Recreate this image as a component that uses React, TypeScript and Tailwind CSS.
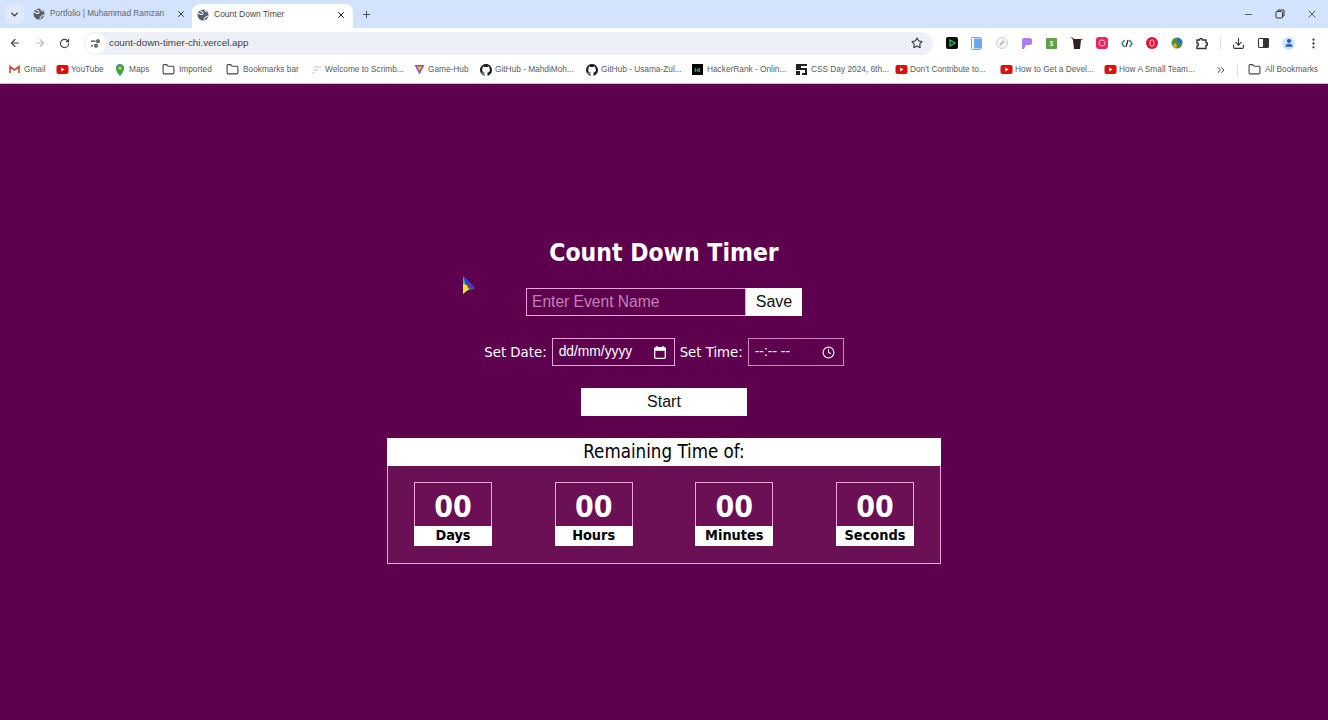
import React from 'react';
import { ArrowLeft, ArrowRight, RotateCw, Star, Plus, X, Minus, ChevronDown, Folder, Download, MoreVertical, ChevronsRight, Clock, User } from 'lucide-react';

const TabGlobe = () => (
  <svg width="12" height="12" viewBox="0 0 12 12" className="shrink-0">
    <circle cx="6" cy="6" r="5.500" fill="#5b6068" />
    <path d="M3 1.500c1 1 2.500 1 3 2.500S4 6 3 5 1 4 .8 5M7 11c0-2 1-2 2-3s2-1 2.500-1M7.500.8C8 2 8.500 3 10 3" stroke="#dfe7f5" strokeWidth="1.100" fill="none" />
  </svg>
);

const YT = () => (
  <svg width="13" height="13" viewBox="0 0 13 13" className="shrink-0">
    <rect x="0.500" y="2" width="12" height="9" rx="2" fill="#e00d0d" />
    <path d="M5.200 4.500v4l3.400-2z" fill="#fff" />
  </svg>
);

const GH = () => (
  <svg width="12" height="12" viewBox="0 0 16 16" className="shrink-0" fill="#1b1f23">
    <path d="M8 0C3.580 0 0 3.580 0 8c0 3.540 2.290 6.530 5.470 7.590.4.070.55-.17.55-.38 0-.19-.01-.82-.01-1.490-2.010.37-2.530-.49-2.690-.94-.09-.23-.48-.94-.82-1.130-.28-.15-.68-.52-.01-.53.63-.01 1.080.58 1.230.82.72 1.210 1.870.87 2.330.66.07-.52.28-.87.51-1.070-1.780-.2-3.640-.89-3.640-3.950 0-.87.31-1.590.82-2.150-.08-.2-.36-1.020.08-2.120 0 0 .67-.21 2.200.82.64-.18 1.320-.27 2-.27s1.360.09 2 .27c1.530-1.040 2.200-.82 2.200-.82.44 1.100.16 1.920.08 2.120.51.56.82 1.270.82 2.150 0 3.070-1.870 3.750-3.650 3.950.29.25.54.73.54 1.480 0 1.070-.01 1.930-.01 2.200 0 .21.15.46.55.38A8.010 8.010 0 0 0 16 8c0-4.420-3.580-8-8-8z" />
  </svg>
);

const Mark = ({ label, width, box, children }: { label: string; width: string; box: string; children: React.ReactNode }) => (
  <div className={`flex shrink-0 items-center ${width}`}>
    <div className={`flex shrink-0 items-center ${box}`}>{children}</div>
    <span className="whitespace-nowrap text-[8.300px] text-[#5a5a5f]">{label}</span>
  </div>
);

const Ext = ({ children }: { children: React.ReactNode }) => (
  <div className="flex w-[25px] shrink-0 items-center justify-center">{children}</div>
);

const TimeBox = ({ value, label }: { value: string; label: string }) => (
  <div className="flex h-[64px] w-[78px] flex-col">
    <div className="flex flex-1 items-center justify-center border-x border-t border-[#e6a8dc] pt-[4px] text-[30px] leading-none font-bold text-white">{value}</div>
    <div className="flex h-[20px] items-center justify-center bg-white text-[14.400px] font-bold text-black">{label}</div>
  </div>
);

export default function App() {
  return (
    <div className="flex h-[720px] w-[1328px] flex-col overflow-hidden bg-[#5e004d] font-['Liberation_Sans',sans-serif]">
      {/* Tab strip */}
      <div className="flex h-[28px] shrink-0 items-end bg-[#d3e3fd] pl-[5px]">
        <div className="mb-[4px] flex h-[20px] w-[19px] items-center justify-center rounded-[6px] bg-[#e0eafc]">
          <ChevronDown size={11} strokeWidth={3} color="#333" />
        </div>
        <div className="flex h-[28px] w-[168px] items-center pb-[1px] pl-[9px]">
          <TabGlobe />
          <span className="ml-[5px] w-[123px] whitespace-nowrap text-[8.300px] text-[#62676f]">Portfolio | Muhammad Ramzan</span>
          <X size={10} strokeWidth={2.400} color="#3c4043" className="ml-[3px]" />
        </div>
        <div className="flex h-[24px] w-[161px] items-center rounded-t-[8px] bg-white pb-[3px] pl-[5px]">
          <TabGlobe />
          <span className="ml-[5px] w-[122px] whitespace-nowrap text-[8.500px] text-[#45484d]">Count Down Timer</span>
          <X size={10} strokeWidth={2.400} color="#222" className="ml-[0px]" />
        </div>
        <Plus size={11} strokeWidth={2} color="#444" className="mb-[8px] ml-[8px]" />
        <div className="flex-1" />
        <div className="mb-[8px] flex items-center gap-[21px] pr-[10px]">
          <Minus size={11} color="#555" />
          <svg width="10" height="10" viewBox="0 0 10 10" fill="none" stroke="#333" strokeWidth="1"><rect x="1" y="2.500" width="6.500" height="6.500" rx="1" /><path d="M3 2.500V1h6v6H7.500" /></svg>
          <X size={12} strokeWidth={1.600} color="#333" />
        </div>
      </div>

      {/* Toolbar */}
      <div className="flex h-[30px] shrink-0 items-center bg-white pl-[9px]">
        <ArrowLeft size={12} strokeWidth={2.200} color="#444" />
        <ArrowRight size={12} strokeWidth={2.200} color="#b5b8bd" className="ml-[13px]" />
        <RotateCw size={11} strokeWidth={2.400} color="#444" className="ml-[13px]" />
        <div className="ml-[14px] flex h-[23px] w-[849px] items-center rounded-full bg-[#edf0f7]">
          <div className="ml-[1px] flex h-[21px] w-[21px] shrink-0 items-center justify-center rounded-full bg-white">
            <svg width="11" height="9" viewBox="0 0 11 9" fill="none" stroke="#444" strokeWidth="1.300">
              <path d="M1 2.200h4.500M1 6.800h2" />
              <circle cx="8" cy="2.200" r="1.300" />
              <circle cx="6" cy="6.800" r="1.300" />
            </svg>
          </div>
          <span className="mt-px ml-[3px] text-[9.800px] text-[#3a3f46]">count-down-timer-chi.vercel.app</span>
          <Star size={12} strokeWidth={2.200} color="#333" className="mr-[10px] ml-auto" />
        </div>
        <div className="ml-[6px] flex items-center">
          <Ext>
            <svg width="12" height="12" viewBox="0 0 12 12"><rect width="12" height="12" rx="2" fill="#0a0f0a" /><path d="M4 3l5 3-5 3z" fill="none" stroke="#35c46a" strokeWidth="1.200" /></svg>
          </Ext>
          <Ext>
            <svg width="11" height="13" viewBox="0 0 11 13"><rect x="0.500" y="0.500" width="10" height="12" rx="1" fill="#fff" stroke="#9aa0a6" /><rect x="3" y="1.500" width="7" height="10" fill="#6ea8ea" /></svg>
          </Ext>
          <Ext>
            <svg width="12" height="12" viewBox="0 0 12 12"><circle cx="6" cy="6" r="5.500" fill="#f5f5f5" stroke="#d0d0d0" /><path d="M4 8l4-4" stroke="#aaa" strokeWidth="1.600" /></svg>
          </Ext>
          <Ext>
            <svg width="11" height="11" viewBox="0 0 11 11"><path d="M1 2a2 2 0 0 1 2-2h5a3 3 0 0 1 0 7H5l-2 4H1z" fill="#b07cf0" /></svg>
          </Ext>
          <Ext><div className="flex h-[11px] w-[11px] items-center justify-center rounded-[1px] bg-[#5da345] text-[7px] leading-none text-white">$</div></Ext>
          <Ext>
            <svg width="12" height="12" viewBox="0 0 12 12"><path d="M0 0l3 2h7l2 1-2 0-1 9H3L2 3z" fill="#2d2323" /><path d="M0 0l3 2M9 2l3 1" stroke="#d04050" strokeWidth="0.800" /></svg>
          </Ext>
          <Ext>
            <svg width="12" height="12" viewBox="0 0 12 12"><rect width="12" height="12" rx="3" fill="#e8285f" /><circle cx="6" cy="6" r="3" fill="none" stroke="#ffc3d3" /></svg>
          </Ext>
          <Ext>
            <svg width="12" height="9" viewBox="0 0 12 9" fill="none" strokeWidth="1.400"><path d="M3.500 1L1 4.500 3.500 8M8.500 1L11 4.500 8.500 8" stroke="#35866c" /><path d="M7 1L5 8" stroke="#333" /></svg>
          </Ext>
          <Ext>
            <svg width="12" height="12" viewBox="0 0 12 12"><circle cx="6" cy="6" r="6" fill="#dc1437" /><rect x="4" y="3" width="4" height="6" rx="1.500" fill="none" stroke="#ffd0d8" /></svg>
          </Ext>
          <Ext>
            <svg width="12" height="12" viewBox="0 0 12 12"><circle cx="6" cy="6" r="5.500" fill="#4f8f2f" /><path d="M6 .5a5.500 5.500 0 0 1 5.500 5.500H7z" fill="#2b6fd6" /><path d="M1 8l4-2 1 4-2 1z" fill="#e6a92c" /></svg>
          </Ext>
          <Ext>
            <svg width="13" height="13" viewBox="0 0 13 13" fill="none" stroke="#333" strokeWidth="1.400"><path d="M2 3h2.500a1.500 1.500 0 0 1 3 0H11v2.500a1.500 1.500 0 0 1 0 3V11.500H2V9a1.500 1.500 0 0 0 0-3z" /></svg>
          </Ext>
          <div className="mr-[5px] ml-[6px] h-[14px] w-px bg-[#dfe1e5]" />
          <Ext><Download size={13} strokeWidth={2} color="#333" /></Ext>
          <Ext><div className="flex h-[10px] w-[11px] justify-end rounded-[1px] border border-[#333]"><div className="w-[5px] bg-[#333]" /></div></Ext>
          <Ext><div className="flex h-[13px] w-[13px] items-center justify-center rounded-full bg-[#d3e3fd]"><User size={10} color="#1a5fc4" fill="#1a5fc4" /></div></Ext>
          <Ext><MoreVertical size={13} strokeWidth={2.200} color="#333" /></Ext>
        </div>
      </div>

      {/* Bookmarks */}
      <div className="flex h-[26px] shrink-0 items-center border-b border-[#e3b8dc] bg-white pb-[2px] pl-[9px]">
        <Mark label="Gmail" width="w-[47px]" box="w-[15px]">
          <svg width="11" height="9" viewBox="0 0 11 9" fill="none"><path d="M1 8V1.500l4.500 3.500L10 1.500V8" stroke="#d9453a" strokeWidth="1.600" /></svg>
        </Mark>
        <Mark label="YouTube" width="w-[59px]" box="w-[15px]"><YT /></Mark>
        <Mark label="Maps" width="w-[47px]" box="w-[14px]">
          <svg width="10" height="12" viewBox="0 0 10 13"><path d="M5 0a4.500 4.500 0 0 1 4.500 4.500C9.500 8 5 13 5 13S.5 8 .5 4.500A4.500 4.500 0 0 1 5 0z" fill="#34a853" /><path d="M1.200 2.500A4.500 4.500 0 0 1 5 0l1 3z" fill="#4285f4" /><circle cx="5" cy="4.500" r="1.700" fill="#fbbc04" /></svg>
        </Mark>
        <Mark label="Imported" width="w-[64px]" box="w-[17px]"><Folder size={13} color="#444" /></Mark>
        <Mark label="Bookmarks bar" width="w-[85px]" box="w-[17px]"><Folder size={13} color="#444" /></Mark>
        <Mark label="Welcome to Scrimb..." width="w-[103px]" box="w-[14px]">
          <svg width="11" height="11" viewBox="0 0 11 11" fill="none" stroke="#c9b8ea" strokeWidth="1.200"><path d="M3 3h7M2 6h5M1 9h3" /></svg>
        </Mark>
        <Mark label="Game-Hub" width="w-[66px]" box="w-[14px]">
          <svg width="11" height="11" viewBox="0 0 11 11"><path d="M.5 1h10L5.500 10.500z" fill="#8b4fd8" /><path d="M3 2.500h5L5.500 7z" fill="#f5c518" /></svg>
        </Mark>
        <Mark label="GitHub - MahdiMoh..." width="w-[106px]" box="w-[15px]"><GH /></Mark>
        <Mark label="GitHub - Usama-Zul..." width="w-[106px]" box="w-[15px]"><GH /></Mark>
        <Mark label="HackerRank - Onlin..." width="w-[104px]" box="w-[15px]">
          <div className="flex h-[11px] w-[11px] items-center justify-center bg-black text-[6px] leading-none font-bold text-[#3ecf6e]">HI</div>
        </Mark>
        <Mark label="CSS Day 2024, 6th..." width="w-[99px]" box="w-[15px]">
          <svg width="11" height="11" viewBox="0 0 11 11" fill="#222"><path d="M0 0h11v2H5v2h6v7H6V9h3V6H0zM0 7h4v4H0z" /></svg>
        </Mark>
        <Mark label="Don't Contribute to..." width="w-[105px]" box="w-[15px]"><YT /></Mark>
        <Mark label="How to Get a Devel..." width="w-[104px]" box="w-[15px]"><YT /></Mark>
        <Mark label="How A Small Team..." width="w-[111px]" box="w-[15px]"><YT /></Mark>
        <ChevronsRight size={12} strokeWidth={2} color="#444" className="shrink-0" />
        <div className="mx-[10px] h-[14px] w-px shrink-0 bg-[#dfe1e5]" />
        <Mark label="All Bookmarks" width="w-[70px]" box="w-[17px]"><Folder size={13} color="#444" /></Mark>
      </div>

      {/* Page */}
      <div className="flex flex-1 flex-col items-center pt-[154px] font-['DejaVu_Sans_Condensed','DejaVu_Sans',sans-serif] text-white">
        <div className="relative w-full">
          {/* screen recorder cursor */}
          <svg width="13" height="19" viewBox="0 0 13 19" className="absolute top-[38px] left-[463px]">
            <path d="M0 0v18l3-3 9-3z" fill="#2bd14f" />
            <path d="M0 0l8 8 4 4-5 1a5 5 0 0 0-4-3z" fill="#2b3fe6" />
            <path d="M0 8l4 1 2 4-6 5z" fill="#e8e83a" />
            <path d="M3 8l3 1 1 4-2-1z" fill="#e02b2b" />
          </svg>
          <h1 className="text-center text-[24.500px] leading-[30px] font-bold">Count Down Timer</h1>
        </div>

        <div className="mt-[20px] flex h-[28px] items-stretch">
          <div className="flex w-[220px] items-center border border-[#e6a8dc] pl-[5px] font-['Liberation_Sans',sans-serif] text-[15.600px] text-[#c57fb8]">
            Enter Event Name
          </div>
          <div className="flex w-[56px] items-center justify-center bg-white font-['Liberation_Sans',sans-serif] text-[16px] text-[#111]">
            Save
          </div>
        </div>

        <div className="mt-[22px] flex h-[28px] items-center text-[14.800px]">
          <span>Set Date:</span>
          <div className="ml-[5px] flex h-[28px] w-[123px] items-center border border-[#e6a8dc] pl-[6px] font-['Liberation_Sans',sans-serif] text-[13.800px]">
            dd/mm/yyyy
            <svg width="12" height="13" viewBox="0 0 12 13" fill="none" className="mr-[8px] ml-auto">
              <rect x="0.700" y="1.700" width="10.600" height="10.600" rx="1" stroke="#fff" strokeWidth="1.300" />
              <path d="M0.700 2h10.600v2.800H0.700z" fill="#fff" />
              <path d="M3 0v2M9 0v2" stroke="#fff" strokeWidth="1.300" />
            </svg>
          </div>
          <span className="ml-[5px]">Set Time:</span>
          <div className="ml-[5px] flex h-[28px] w-[96px] items-center border border-[#c98abd] pl-[6px] font-['Liberation_Sans',sans-serif] text-[13.800px]">
            --:-- --
            <Clock size={13} strokeWidth={2} className="mr-[8px] ml-auto" />
          </div>
        </div>

        <div className="mt-[22px] flex h-[28px] w-[166px] items-center justify-center bg-white font-['Liberation_Sans',sans-serif] text-[16px] text-[#111]">
          Start
        </div>

        <div className="mt-[22px] flex h-[126px] w-[554px] flex-col border-x border-b border-[#e6a8dc] bg-[#6b1055]">
          <div className="-mx-px flex h-[28px] items-center justify-center bg-white text-[18.600px] text-black">Remaining Time of:</div>
          <div className="flex flex-1 items-center justify-between px-[26px] pb-[1px]">
            <TimeBox value="00" label="Days" />
            <TimeBox value="00" label="Hours" />
            <TimeBox value="00" label="Minutes" />
            <TimeBox value="00" label="Seconds" />
          </div>
        </div>
      </div>
    </div>
  );
}
